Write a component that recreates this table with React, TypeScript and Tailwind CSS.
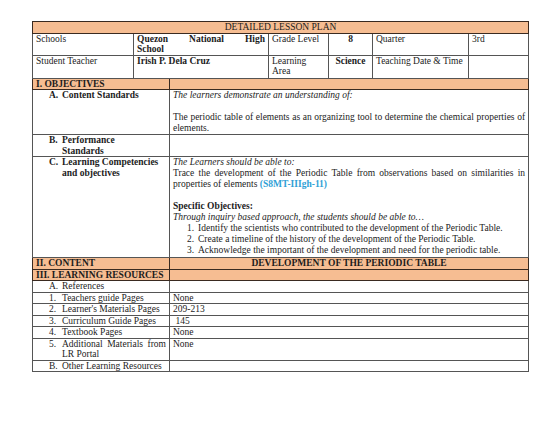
import React from "react";

const cell = "border border-[#555] align-top px-[3px] py-0";
const head = "border border-[#3a2a20] bg-[#f6bd92] px-[3px] py-0 align-top";

function Item({ n, children, justify }: { n: string; children: React.ReactNode; justify?: boolean }) {
  return (
    <div className="flex pl-[13px]">
      <span className="w-[13px] shrink-0">{n}</span>
      <span className={justify ? "flex-1 text-justify" : "flex-1"}>{children}</span>
    </div>
  );
}

export default function App() {
  const refs = [
    { n: "1.", label: "Teachers guide Pages", value: "None" },
    { n: "2.", label: "Learner's Materials Pages", value: "209-213" },
    { n: "3.", label: "Curriculum Guide Pages", value: "\u00a0145" },
    { n: "4.", label: "Textbook Pages", value: "None" },
  ];

  return (
    <div className="w-[560px] h-[433px] bg-white pt-[21px] pl-[32px] font-[family-name:Liberation_Serif,serif] text-[9.5px] leading-[10.5px] text-[#1c1c1c]">
      <table className="w-[496px] table-fixed border-collapse font-[family-name:Liberation_Serif,serif] text-[9.5px] leading-[10.5px]">
        <colgroup>
          <col className="w-[101px]" />
          <col className="w-[36px]" />
          <col className="w-[99px]" />
          <col className="w-[60px]" />
          <col className="w-[44px]" />
          <col className="w-[96px]" />
          <col className="w-[60px]" />
        </colgroup>
        <tbody>
          <tr>
            <td colSpan={7} className={`${head} text-center`}>
              DETAILED LESSON PLAN
            </td>
          </tr>
          <tr className="h-[22px]">
            <td className={cell}>Schools</td>
            <td colSpan={2} className={`${cell} font-bold`}>
              <div className="text-justify [text-align-last:justify]">Quezon National High</div>
              <div>School</div>
            </td>
            <td className={cell}>Grade Level</td>
            <td className={`${cell} font-bold text-center`}>8</td>
            <td className={cell}>Quarter</td>
            <td className={cell}>3rd</td>
          </tr>
          <tr className="h-[23px]">
            <td className={cell}>Student Teacher</td>
            <td colSpan={2} className={`${cell} font-bold`}>Irish P. Dela Cruz</td>
            <td className={cell}>
              Learning
              <br />
              Area
            </td>
            <td className={`${cell} font-bold text-center`}>Science</td>
            <td className={cell}>Teaching Date &amp; Time</td>
            <td className={cell}></td>
          </tr>
          <tr>
            <td colSpan={2} className={`${head} font-bold`}>I. OBJECTIVES</td>
            <td colSpan={5} className={head}></td>
          </tr>
          <tr>
            <td colSpan={2} className={`${cell} font-bold`}>
              <Item n="A.">Content Standards</Item>
            </td>
            <td colSpan={5} className={`${cell} leading-[11px]`}>
              <p className="italic">The learners demonstrate an understanding of:</p>
              <p>&nbsp;</p>
              <p className="text-justify">
                The periodic table of elements as an organizing tool to determine the chemical properties of elements.
              </p>
            </td>
          </tr>
          <tr className="h-[22px]">
            <td colSpan={2} className={`${cell} font-bold`}>
              <Item n="B.">
                Performance
                <br />
                Standards
              </Item>
            </td>
            <td colSpan={5} className={cell}></td>
          </tr>
          <tr>
            <td colSpan={2} className={`${cell} font-bold`}>
              <Item n="C.">
                Learning Competencies
                <br />
                and objectives
              </Item>
            </td>
            <td colSpan={5} className={`${cell} leading-[11px] pb-[1px]`}>
              <p className="italic">The Learners should be able to:</p>
              <p className="text-justify">
                Trace the development of the Periodic Table from observations based on similarities in properties of
                elements <span className="font-bold text-[#2f9fd6]">(S8MT-IIIgh-11)</span>
              </p>
              <p>&nbsp;</p>
              <p className="font-bold">Specific Objectives:</p>
              <p className="italic">Through inquiry based approach, the students should be able to…</p>
              <ol className="pl-[14px]">
                <li className="flex">
                  <span className="w-[11px] shrink-0">1.</span>
                  <span>Identify the scientists who contributed to the development of the Periodic Table.</span>
                </li>
                <li className="flex">
                  <span className="w-[11px] shrink-0">2.</span>
                  <span>Create a timeline of the history of the development of the Periodic Table.</span>
                </li>
                <li className="flex">
                  <span className="w-[11px] shrink-0">3.</span>
                  <span>Acknowledge the important of the development and need for the periodic table.</span>
                </li>
              </ol>
            </td>
          </tr>
          <tr>
            <td colSpan={2} className={`${head} font-bold`}>II. CONTENT</td>
            <td colSpan={5} className={`${head} font-bold text-center`}>DEVELOPMENT OF THE PERIODIC TABLE</td>
          </tr>
          <tr>
            <td colSpan={2} className={`${head} font-bold`}>III. LEARNING RESOURCES</td>
            <td colSpan={5} className={head}></td>
          </tr>
          <tr>
            <td colSpan={2} className={cell}>
              <Item n="A.">References</Item>
            </td>
            <td colSpan={5} className={cell}></td>
          </tr>
          {refs.map((r) => (
            <tr key={r.n}>
              <td colSpan={2} className={cell}>
                <Item n={r.n}>{r.label}</Item>
              </td>
              <td colSpan={5} className={cell}>{r.value}</td>
            </tr>
          ))}
          <tr>
            <td colSpan={2} className={cell}>
              <Item n="5." justify>
                Additional Materials from LR Portal
              </Item>
            </td>
            <td colSpan={5} className={cell}>None</td>
          </tr>
          <tr>
            <td colSpan={2} className={cell}>
              <Item n="B.">Other Learning Resources</Item>
            </td>
            <td colSpan={5} className={cell}></td>
          </tr>
        </tbody>
      </table>
    </div>
  );
}
